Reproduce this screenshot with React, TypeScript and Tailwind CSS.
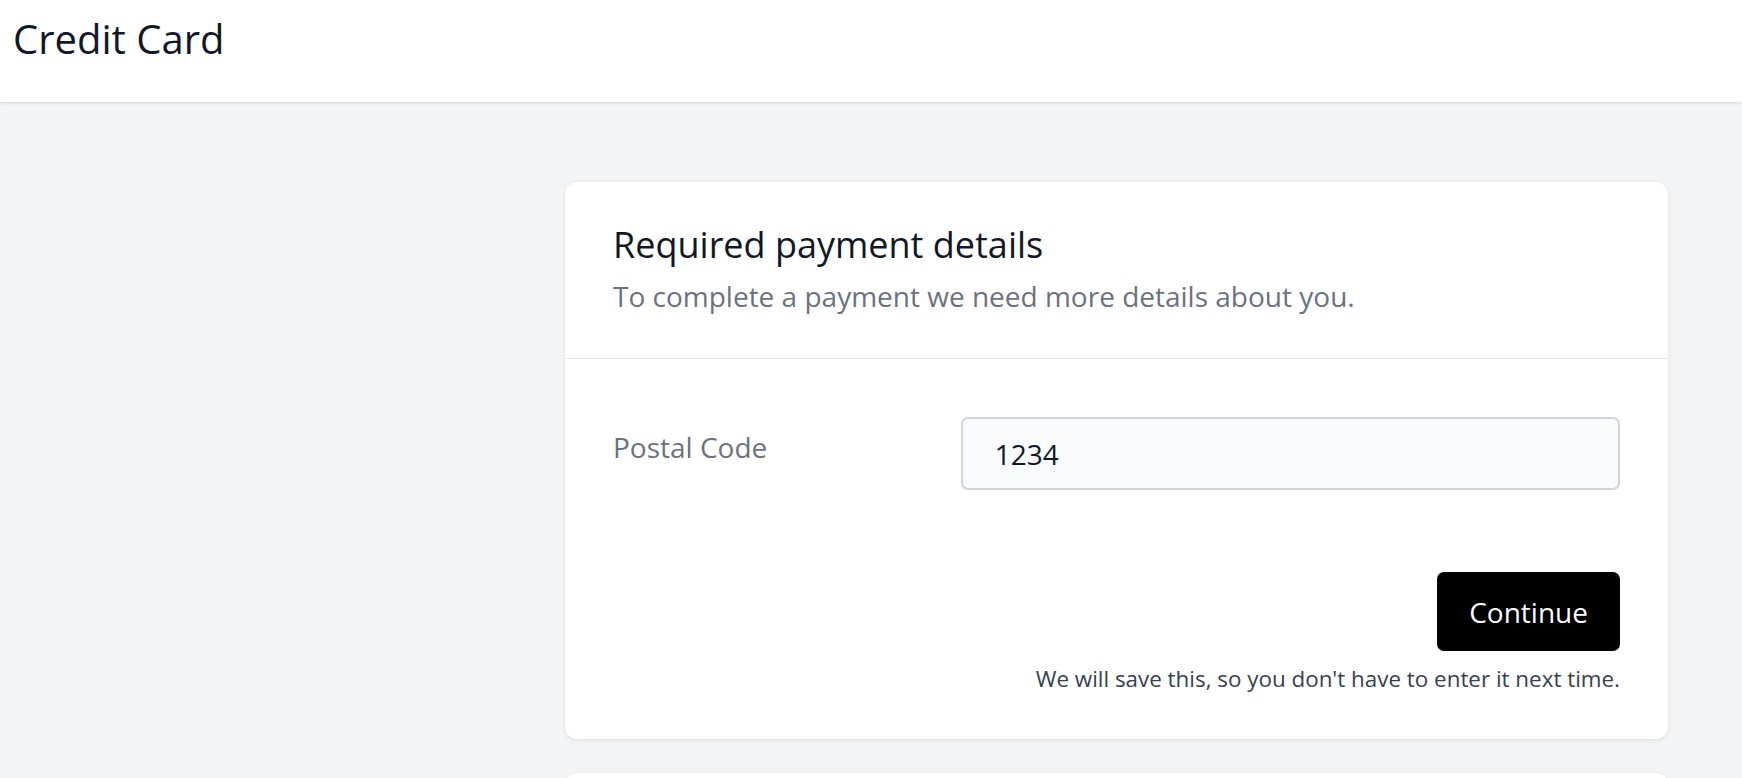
import React from 'react'

const App = () => {
    return (
        <div className="min-h-screen bg-[#f3f4f6] font-['Open_Sans',sans-serif] overflow-hidden h-[778px]">

            {/* ---------- HEADER ---------- */}
            <header className="bg-white h-[102px] shadow-[0_1px_3px_rgba(0,0,0,0.12)] relative">
                <h1 className="pl-[13px] pt-[14px] text-[40px] leading-[50px] text-[#111827]">Credit Card</h1>
            </header>

            {/* ---------- PAYMENT CARD ---------- */}
            <div className="ml-[565px] w-[1103px] mt-[80px] flex flex-col gap-[34px]">

                <div className="bg-white rounded-[12px] shadow-[0_1px_4px_rgba(0,0,0,0.1)]">

                    <div className="px-[48px] pt-[38px] h-[177px] border-b border-[#e5e7eb]">
                        <h2 className="text-[36px] leading-[50px] text-[#111827]">Required payment details</h2>
                        <p className="text-[28px] leading-[40px] mt-[6px] text-[#6b7280]">To complete a payment we need more details about you.</p>
                    </div>

                    <div className="px-[48px] pt-[58px] pb-[44px]">

                        <div className="grid grid-cols-3 gap-[36px]">
                            <label className="text-[28px] leading-[40px] text-[#6b7280] pt-[10px]">Postal Code</label>
                            <div className="col-span-2">
                                <input
                                    defaultValue="1234"
                                    className="w-full h-[73px] px-[32px] bg-[#f9fafb] border-2 border-[#d1d5db] rounded-[7px] text-[28px] text-[#111827] outline-none"
                                />
                            </div>
                        </div>

                        <div className="flex flex-col items-end mt-[82px]">
                            <button className="bg-black text-white rounded-[7px] h-[79px] px-[32px] text-[28px]">Continue</button>
                            <p className="text-[22.4px] leading-[32px] text-[#374151] mt-[12px]">We will save this, so you don't have to enter it next time.</p>
                        </div>

                    </div>

                </div>

                <div className="bg-white rounded-[12px] shadow-[0_1px_4px_rgba(0,0,0,0.1)] h-[300px]"></div>

            </div>

        </div>
    )
}

export default App
